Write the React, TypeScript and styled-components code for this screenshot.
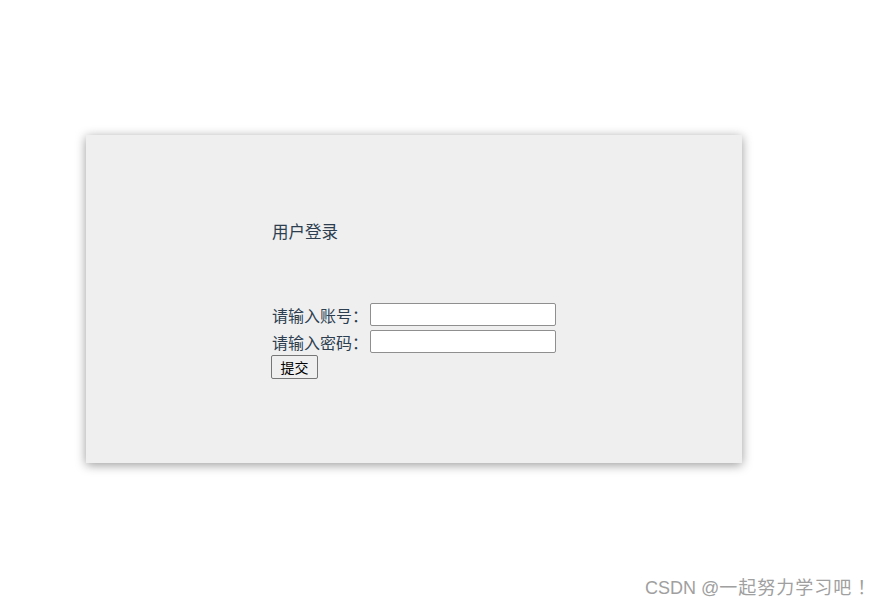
import styled, { createGlobalStyle } from "styled-components";

const GlobalStyle = createGlobalStyle`
  html, body {
    margin: 0;
    padding: 0;
    background: #ffffff;
  }
  body {
    font-family: "Liberation Sans", "Noto Sans CJK SC", sans-serif;
    color: #2c3e50;
  }
`;

const Page = styled.div`
  position: relative;
  width: 883px;
  height: 605px;
  padding: 135px 0 0 86px;
  box-sizing: border-box;
`;

const Card = styled.div`
  width: 656px;
  height: 328px;
  background-color: #efefef;
  box-shadow: 0 2px 10px rgba(0, 0, 0, 0.4);
  padding: 86px 0 0 186px;
  box-sizing: border-box;
`;

const Title = styled.div`
  font-size: 16.5px;
  line-height: 22px;
  margin-bottom: 60px;
`;

const Row = styled.div`
  display: flex;
  align-items: center;
  height: 23px;
  margin-bottom: 4px;
  font-size: 16px;
`;

const Label = styled.label`
  width: 98px;
  white-space: nowrap;
`;

const Input = styled.input`
  width: 186px;
  height: 23px;
  box-sizing: border-box;
  border: 1px solid #8f8f8f;
  border-radius: 2px;
  background: #ffffff;
  padding: 1px 2px;
  font-size: 13px;
`;

const Submit = styled.button`
  display: block;
  width: 47px;
  height: 24px;
  margin: -2px 0 0 -1px;
  padding: 0;
  font-size: 14px;
  font-family: "Liberation Sans", "Noto Sans CJK SC", sans-serif;
  color: #000;
  background: #efefef;
  border: 1px solid #767676;
  border-radius: 2px;
`;

const Watermark = styled.div`
  position: absolute;
  left: 645px;
  top: 573px;
  font-size: 18px;
  color: #a0a0a0;
  white-space: nowrap;

  span {
    letter-spacing: 1px;
  }

  b {
    font-weight: normal;
    margin-left: 5px;
  }
`;

function App() {
  return (
    <>
      <GlobalStyle />
      <Page>
        <Card>
          <Title>用户登录</Title>
          <Row>
            <Label>请输入账号：</Label>
            <Input type="text" />
          </Row>
          <Row>
            <Label>请输入密码：</Label>
            <Input type="password" />
          </Row>
          <Submit>提交</Submit>
        </Card>
        <Watermark>
          CSDN @<span>一起努力学习吧</span>
          <b>！</b>
        </Watermark>
      </Page>
    </>
  );
}

export default App;
